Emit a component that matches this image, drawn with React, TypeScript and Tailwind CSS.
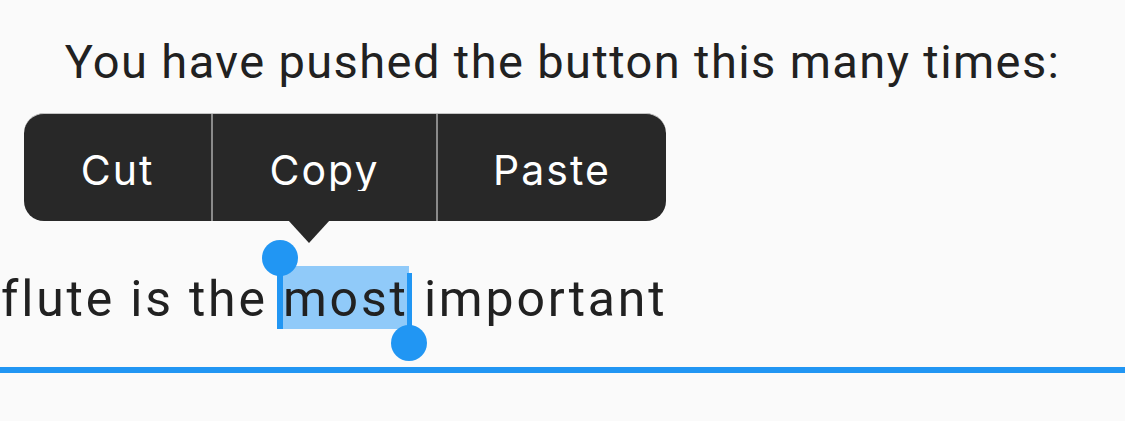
import React from 'react';

const font = { fontFamily: 'Roboto, "Noto Sans", sans-serif' };

const Handle = ({ className }: { className: string }) => (
  <span className={`absolute w-[36px] h-[36px] rounded-full bg-[#2196f3] ${className}`} />
);

const SelectionToolbar = () => {
  const items = [
    { label: 'Cut', width: 'w-[187px]' },
    { label: 'Copy', width: 'w-[223px]' },
    { label: 'Paste', width: 'w-[228px]' },
  ];

  return (
    <div className="absolute left-[24px] top-[113px]">
      <div className="flex h-[108px] rounded-[20px] bg-[#282828] border-t border-[#c4c4c4] overflow-hidden">
        {items.map((item, i) => (
          <React.Fragment key={item.label}>
            {i > 0 && <div className="w-[2px] bg-[#8a8a8a]" />}
            <div className={`${item.width} flex justify-center`}>
              <div className="mt-[36px] h-[41px] overflow-hidden font-['Inter',sans-serif] text-[41px] leading-[40px] tracking-[2px] text-white">
                {item.label}
              </div>
            </div>
          </React.Fragment>
        ))}
      </div>
      {/* pointer */}
      <div className="absolute left-[264px] top-[107px] w-0 h-0 border-l-[21px] border-r-[21px] border-t-[23px] border-l-transparent border-r-transparent border-t-[#282828]" />
    </div>
  );
};

const App = () => {
  return (
    <div className="relative w-[1125px] h-[421px] bg-[#fafafa] overflow-hidden" style={font}>
      {/* Counter caption */}
      <p className="pt-[34px] text-center text-[47px] leading-[56px] tracking-[1.4px] text-[#212121]">
        You have pushed the button this many times:
      </p>

      {/* Text field */}
      <div className="mt-[178px]">
        <p className="text-[50px] leading-[63px] tracking-[2.8px] text-[#212121] whitespace-nowrap pl-[1px]">
          flute is the{' '}
          <span className="relative inline-block">
            <span className="absolute left-0 right-0 top-[-2px] h-[63px] bg-[#90caf9]" />
            <span className="absolute left-[-6px] top-[-10px] w-[6px] h-[71px] bg-[#2196f3]" />
            <Handle className="left-[-21px] top-[-28px]" />
            <span className="absolute right-[-3px] top-[5px] w-[5px] h-[70px] bg-[#2196f3]" />
            <Handle className="right-[-18px] top-[57px]" />
            <span className="relative">most</span>
          </span>{' '}
          important
        </p>
        <div className="mt-[36px] h-[6px] bg-[#2196f3]" />
      </div>

      <SelectionToolbar />
    </div>
  );
};

export default App;
